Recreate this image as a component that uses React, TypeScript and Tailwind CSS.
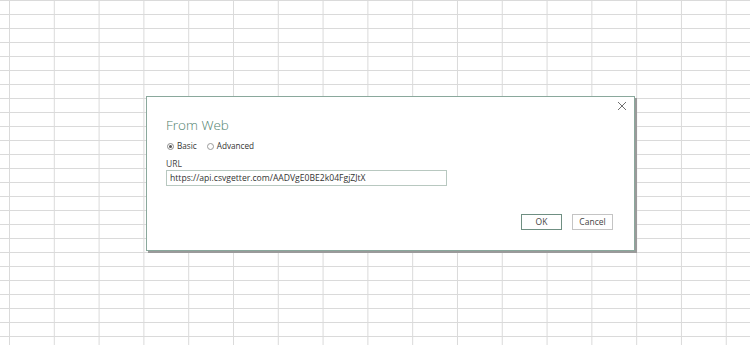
import React from "react";

export default function App() {
  return (
    <div
      className="relative w-[750px] h-[345px] overflow-hidden bg-white bg-[linear-gradient(to_right,#dadada_1px,transparent_1px),linear-gradient(to_bottom,#dadada_1px,transparent_1px)] bg-[size:44.8px_14px] bg-[position:9px_0px]"
      style={{ fontFamily: '"Open Sans", "Noto Sans", sans-serif' }}
    >
      <div className="absolute left-[146px] top-[96px] w-[489px] h-[155px] bg-white border border-[#8aa89c] shadow-[2px_2px_0_0_#9a9a9a] flex flex-col">
        <div className="flex justify-end pr-[7px] pt-[3px] h-[16px]">
          <svg width="10" height="10" viewBox="0 0 10 10" className="mt-[1px]">
            <path d="M1 1 L9 9 M9 1 L1 9" stroke="#707070" strokeWidth="1" />
          </svg>
        </div>
        <div className="pl-[19px] flex flex-col">
          <div className="text-[13.5px] font-light text-[#4f7f6d] leading-[18px] mt-[3px]">From Web</div>
          <div className="flex items-center mt-[6px] text-[8.2px] text-[#333] leading-[12px]">
            <span className="w-[7px] h-[7px] rounded-full border border-[#8a8a8a] flex items-center justify-center ml-[1px]">
              <span className="w-[3px] h-[3px] rounded-full bg-[#555]" />
            </span>
            <span className="ml-[3px]">Basic</span>
            <span className="w-[7px] h-[7px] rounded-full border border-[#9a9a9a] ml-[10px]" />
            <span className="ml-[3px]">Advanced</span>
          </div>
          <div className="text-[8.5px] text-[#444] leading-[12px] mt-[6px]">URL</div>
          <div className="w-[281px] h-[16px] border border-[#b8c8c0] mt-0 flex items-center pl-[3px] text-[8.6px] text-[#333]">
            https://api.csvgetter.com/AADVgE0BE2k04FgjZJtX
          </div>
        </div>
        <div className="flex justify-end gap-[10px] pr-[21px] mt-[28px]">
          <div className="w-[41px] h-[16px] border border-[#6f8f82] flex items-center justify-center text-[8.5px] text-[#444]">OK</div>
          <div className="w-[41px] h-[16px] border border-[#c4c4c4] flex items-center justify-center text-[8.5px] text-[#444]">Cancel</div>
        </div>
      </div>
    </div>
  );
}
